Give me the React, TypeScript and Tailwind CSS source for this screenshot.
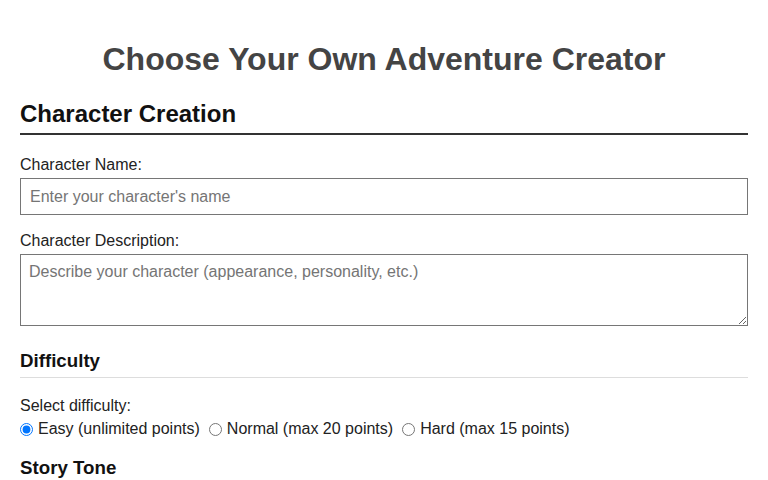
export default function App() {
  const levels = [
    { id: 'easy', label: 'Easy (unlimited points)' },
    { id: 'normal', label: 'Normal (max 20 points)' },
    { id: 'hard', label: 'Hard (max 15 points)' },
  ]

  return (
    <div className="min-h-screen bg-white p-5 font-['Liberation_Sans',Arial,sans-serif] text-[16px] text-[#222]">
      <h1 className="mt-[21px] mb-[22px] text-center text-[32px] leading-[37px] font-bold text-[#444]">
        Choose Your Own Adventure Creator
      </h1>

      <h2 className="mb-[21px] border-b-2 border-[#333] pb-[5px] text-2xl leading-[28px] font-bold text-[#111]">
        Character Creation
      </h2>

      <div className="mb-[17px]">
        <label className="mb-[4px] block leading-[18px]">Character Name:</label>
        <input
          type="text"
          placeholder="Enter your character's name"
          className="block h-[37px] w-full border border-[#767676] px-[9px] text-[16px] placeholder:text-[#757575] outline-none"
        />
      </div>

      <div className="mb-[24px]">
        <label className="mb-[4px] block leading-[18px]">Character Description:</label>
        <textarea
          placeholder="Describe your character (appearance, personality, etc.)"
          className="block h-[72px] w-full border border-[#767676] px-2 py-2 text-[16px] leading-[18px] placeholder:text-[#757575] outline-none"
        />
      </div>

      <h3 className="mb-[19px] border-b border-[#ddd] pb-[5px] text-[18.72px] leading-[22px] font-bold text-[#111]">
        Difficulty
      </h3>

      <div className="mb-[19px]">
        <p className="mb-[5px] leading-[18px]">Select difficulty:</p>
        <div className="flex items-center leading-[18px]">
          {levels.map((l, i) => (
            <label key={l.id} className="mr-[9px] inline-flex items-center">
              <input
                type="radio"
                name="difficulty"
                defaultChecked={i === 0}
                className="m-0 mr-[5px] h-[13px] w-[13px]"
              />
              {l.label}
            </label>
          ))}
        </div>
      </div>

      <h3 className="border-b border-[#ddd] pb-[5px] text-[18.72px] leading-[22px] font-bold text-[#111]">
        Story Tone
      </h3>
    </div>
  )
}
